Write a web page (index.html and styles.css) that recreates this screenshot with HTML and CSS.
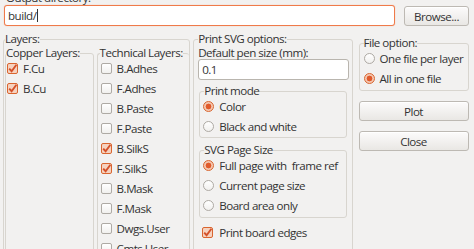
FILE: index.html
```html
<!DOCTYPE html>
<html lang="en">
<head>
  <meta charset="UTF-8" />
  <title>Print SVG</title>
  <link rel="stylesheet" href="styles.css">
</head>
<body>
  <div class="outdir-label"><span>Output directory:</span></div>
  <div class="outdir-row">
    <div class="entry focused">build/<span class="caret"></span></div>
    <button class="btn browse">Browse...</button>
  </div>

  <div class="main">
    <!-- Layers -->
    <fieldset class="frame layers">
      <legend>Layers:</legend>
      <div class="layer-cols">
        <fieldset class="frame copper">
          <legend>Copper Layers:</legend>
          <div class="check on"><span class="box"></span>F.Cu</div>
          <div class="check on"><span class="box"></span>B.Cu</div>
        </fieldset>
        <fieldset class="frame technical">
          <legend>Technical Layers:</legend>
          <div class="check"><span class="box"></span>B.Adhes</div>
          <div class="check"><span class="box"></span>F.Adhes</div>
          <div class="check"><span class="box"></span>B.Paste</div>
          <div class="check"><span class="box"></span>F.Paste</div>
          <div class="check on"><span class="box"></span>B.SilkS</div>
          <div class="check on"><span class="box"></span>F.SilkS</div>
          <div class="check"><span class="box"></span>B.Mask</div>
          <div class="check"><span class="box"></span>F.Mask</div>
          <div class="check"><span class="box"></span>Dwgs.User</div>
          <div class="check"><span class="box"></span>Cmts.User</div>
        </fieldset>
      </div>
    </fieldset>

    <!-- Print SVG options -->
    <fieldset class="frame svg-options">
      <legend>Print SVG options:</legend>
      <div class="pen-label">Default pen size (mm):</div>
      <div class="entry pen">0.1</div>

      <fieldset class="frame sub print-mode">
        <legend>Print mode</legend>
        <div class="radio on"><span class="dot"></span>Color</div>
        <div class="radio"><span class="dot"></span>Black and white</div>
      </fieldset>

      <fieldset class="frame sub page-size">
        <legend>SVG Page Size</legend>
        <div class="radio on"><span class="dot"></span>Full page with&nbsp; frame ref</div>
        <div class="radio"><span class="dot"></span>Current page size</div>
        <div class="radio"><span class="dot"></span>Board area only</div>
      </fieldset>

      <div class="check on edges"><span class="box"></span>Print board edges</div>
    </fieldset>

    <!-- File option + buttons -->
    <div class="side">
      <fieldset class="frame file-option">
        <legend>File option:</legend>
        <div class="radio"><span class="dot"></span>One file per layer</div>
        <div class="radio on"><span class="dot"></span>All in one file</div>
      </fieldset>
      <button class="btn wide">Plot</button>
      <button class="btn wide">Close</button>
    </div>
  </div>
</body>
</html>
```

FILE: styles.css
```css
body {
  margin: 0;
  padding: 0 5px 0 3px;
  height: 249px;
  overflow: hidden;
  background: #f2f1f0;
  font-family: "Open Sans", sans-serif;
  font-size: 11.6px;
  letter-spacing: -0.5px;
  color: #333;
}

.outdir-label {
  height: 5px;
  display: flex;
  align-items: flex-end;
  padding-left: 3px;
  line-height: 14px;
}

.outdir-row {
  display: flex;
  gap: 9px;
  padding-left: 1px;
}

.entry {
  box-sizing: border-box;
  height: 21px;
  line-height: 19px;
  padding-left: 3px;
  background: #fff;
  border: 1px solid #b9b5ae;
  border-radius: 3px;
}

.entry.focused {
  width: 391px;
  border-color: #ef7a4a;
  box-shadow: 0 0 1px #f3a07d;
}

.caret {
  display: inline-block;
  width: 1px;
  height: 13px;
  margin-left: 1px;
  vertical-align: -2px;
  background: #333;
}

.btn {
  box-sizing: border-box;
  height: 20px;
  padding: 0;
  font: inherit;
  letter-spacing: inherit;
  color: #333;
  border: 1px solid #bdb9b3;
  border-radius: 3px;
  background: linear-gradient(#fcfbfb, #e9e7e4);
  box-shadow: inset 0 1px #fff;
}

.browse {
  width: 65px;
  margin-top: 1px;
}

.main {
  display: flex;
  height: 300px;
  margin-top: 6px;
}

.frame {
  margin: 0;
  min-width: 0;
  box-sizing: border-box;
  border: 1px solid #d8d5cf;
  border-radius: 3px;
  padding: 0;
}

.frame legend {
  padding: 0;
  line-height: 14px;
  white-space: nowrap;
}

.layers {
  width: 188px;
  padding: 0 0 0 1px;
}

.layer-cols {
  display: flex;
  height: 100%;
  gap: 3px;
}

.copper {
  width: 89px;
  padding: 0 0 0 1px;
}

.copper legend {
  margin-left: -1px;
}

.technical {
  width: 93px;
  padding: 0 0 0 3px;
  border-right: none;
}

.technical legend {
  margin-left: -1px;
}

.copper .check:first-of-type,
.technical .check:first-of-type {
  margin-top: -2px;
}

.check,
.radio {
  display: flex;
  align-items: center;
  gap: 5px;
  height: 20px;
  white-space: nowrap;
}

.box,
.dot {
  flex: none;
  box-sizing: border-box;
  width: 11px;
  height: 11px;
  border: 1px solid #aeaaa4;
  background: linear-gradient(#fff, #f1f0ee);
}

.box {
  border-radius: 2px;
}

.check.on .box {
  border-color: #d9652f;
  background: #f6d2bf url("data:image/svg+xml,%3Csvg xmlns='http://www.w3.org/2000/svg' viewBox='0 0 9 9'%3E%3Cpath d='M1.2 4.6 L3.6 7.2 L8.4 0.8' fill='none' stroke='%23d4512a' stroke-width='1.9'/%3E%3C/svg%3E") center / 9px 9px no-repeat;
}

.dot {
  border-radius: 50%;
}

.radio.on .dot {
  border-color: #d9652f;
  background: radial-gradient(circle, #e05a2b 0 2.6px, #f4c8b2 3.2px);
}

.svg-options {
  width: 160px;
  margin-left: 3px;
  padding: 0 4px 0 4px;
}

.pen-label {
  line-height: 13px;
  white-space: nowrap;
}

.entry.pen {
  width: 151px;
}

.sub {
  margin: 4px 1px 0 1px;
  padding: 0 0 1px 3px;
}

.sub legend {
  margin-left: 1px;
}

.print-mode .radio:first-of-type,
.page-size .radio:first-of-type {
  margin-top: -2px;
}

.page-size {
  margin-top: 5px;
  padding-bottom: 2px;
}

.edges {
  margin-top: 4px;
  padding-left: 4px;
  gap: 6px;
}

.side {
  display: flex;
  flex-direction: column;
  width: 111px;
  margin-left: 6px;
  padding-top: 4px;
}

.file-option {
  padding: 0 0 2px 4px;
}

.file-option .radio:first-of-type {
  margin-top: -2px;
}

.wide {
  width: 110px;
  margin-top: 10px;
}
```
